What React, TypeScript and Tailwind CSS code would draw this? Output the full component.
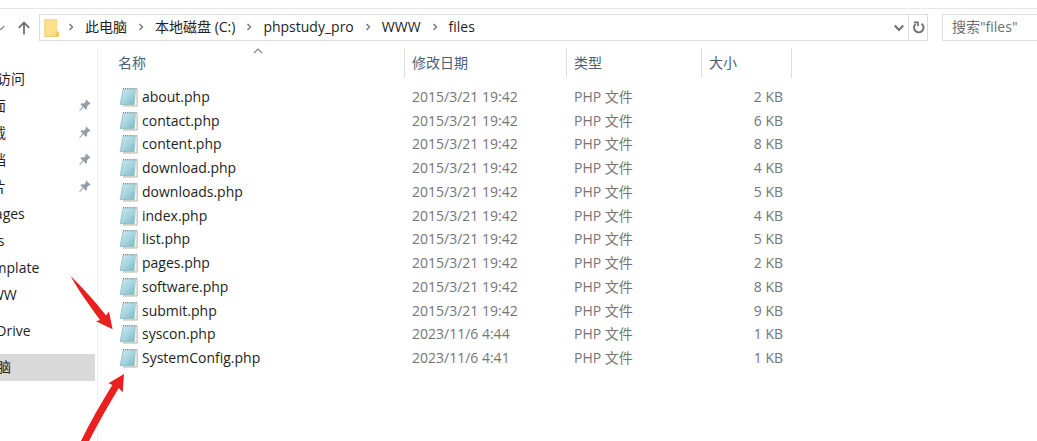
import { Fragment } from 'react';
import type { ReactNode } from 'react';

type FileRow = {
  name: string;
  modified: string;
  size: string;
};

const crumbs = ['此电脑', '本地磁盘 (C:)', 'phpstudy_pro', 'WWW', 'files'];

const pinnedFolders = ['桌面', '下载', '文档', '图片'];
const recentFolders = ['Images', 'files', 'Template', 'WWW'];

const files: FileRow[] = [
  { name: 'about.php', modified: '2015/3/21 19:42', size: '2 KB' },
  { name: 'contact.php', modified: '2015/3/21 19:42', size: '6 KB' },
  { name: 'content.php', modified: '2015/3/21 19:42', size: '8 KB' },
  { name: 'download.php', modified: '2015/3/21 19:42', size: '4 KB' },
  { name: 'downloads.php', modified: '2015/3/21 19:42', size: '5 KB' },
  { name: 'index.php', modified: '2015/3/21 19:42', size: '4 KB' },
  { name: 'list.php', modified: '2015/3/21 19:42', size: '5 KB' },
  { name: 'pages.php', modified: '2015/3/21 19:42', size: '2 KB' },
  { name: 'software.php', modified: '2015/3/21 19:42', size: '8 KB' },
  { name: 'submit.php', modified: '2015/3/21 19:42', size: '9 KB' },
  { name: 'syscon.php', modified: '2023/11/6 4:44', size: '1 KB' },
  { name: 'SystemConfig.php', modified: '2023/11/6 4:41', size: '1 KB' },
];

function FolderIcon() {
  return (
    <svg width="16" height="20" viewBox="0 0 16 20" className="shrink-0">
      <path d="M0.5 1h13v12l1.5 1.5V19H0.5z" fill="#fbe08c" />
      <path d="M0.5 1h1v18h-1z" fill="#f0cf72" />
      <path d="M11.5 18.5v-3.5l2-2 1.5 1.5V19z" fill="#eec75e" />
      <path d="M0.5 18H15v1H0.5z" fill="#f0cf72" />
    </svg>
  );
}

function NotepadIcon() {
  return (
    <svg width="20" height="20" viewBox="0 0 20 20" className="shrink-0">
      <path d="M5 2h13.6v17.4H4z" fill="#b9b5a4" />
      <path d="M4.5 2h13.2v16.4H3z" fill="#f4f2ea" />
      <path d="M4 2h13L15.4 17.6H1.2z" fill="url(#note)" />
      <path d="M4 2.5 1.2 17.6h14.2" fill="none" stroke="#7fb0bc" strokeWidth="0.7" />
      <path d="M4 1.6h13.6" stroke="#66757a" strokeWidth="1.4" strokeDasharray="1.1 1" />
      <defs>
        <linearGradient id="note" x1="0" y1="0" x2="1" y2="1">
          <stop offset="0" stopColor="#cdeaf0" />
          <stop offset="0.5" stopColor="#a6d5df" />
          <stop offset="1" stopColor="#76b6c6" />
        </linearGradient>
      </defs>
    </svg>
  );
}

function PinIcon() {
  return (
    <svg width="12" height="13" viewBox="0 0 12 13" className="shrink-0">
      <path
        d="M7.2 0.6 11.6 4.8 10.4 5.6 9.8 5.4 8 7.4 8.1 9.8 7 10.8 4.3 8.3 0.8 12.2 0.2 11.6 3.6 7.5 1.4 5.3 2.4 4.3 4.9 4.4 6.9 2.4 6.5 1.6z"
        fill="#94a0a8"
      />
    </svg>
  );
}

function CrumbArrow() {
  return (
    <svg width="6" height="8" viewBox="0 0 6 8" className="shrink-0">
      <path d="M1.5 1 4.5 4 1.5 7" fill="none" stroke="#777" strokeWidth="1.4" />
    </svg>
  );
}

function SideItem({ children, root, pinned, active }: { children: ReactNode; root?: boolean; pinned?: boolean; active?: boolean }) {
  return (
    <a
      href="#"
      className={`flex h-[27px] items-center justify-between pr-1 pb-[2px] whitespace-nowrap ${root ? 'pl-[17px]' : 'pl-[26px]'} ${
        active ? 'bg-[#d9d9d9]' : ''
      }`}
    >
      {children}
      {pinned && <PinIcon />}
    </a>
  );
}

function AddressBar() {
  return (
    <header className="mt-2 flex items-center border-t border-[#e6e6e6] pt-[5px]">
      <div className="flex w-[39px] shrink-0 items-center justify-between pr-2">
        <button aria-label="最近浏览的位置">
          <svg width="5" height="8" viewBox="0 0 5 8">
            <path d="M0 5 1 5.5 4.2 2" fill="none" stroke="#8a8a8a" strokeWidth="1.3" />
          </svg>
        </button>
        <button aria-label="上移">
          <svg width="14" height="14" viewBox="0 0 14 14">
            <path d="M7 13.5V1.5M1.8 6.8 7 1.5 12.2 6.8" fill="none" stroke="#707070" strokeWidth="1.8" />
          </svg>
        </button>
      </div>

      <nav className="flex h-[27px] min-w-0 flex-1 items-center border border-[#dcdcdc] pl-1">
        <FolderIcon />
        <div className="flex flex-1 items-center gap-[11px] pb-[2px] pl-2">
          {crumbs.map((crumb) => (
            <Fragment key={crumb}>
              <CrumbArrow />
              <button className="whitespace-nowrap">{crumb}</button>
            </Fragment>
          ))}
        </div>
        <button aria-label="以前的位置" className="px-1">
          <svg width="10" height="8" viewBox="0 0 10 8">
            <path d="M0.8 1.5 5 6 9.2 1.5" fill="none" stroke="#707070" strokeWidth="2" />
          </svg>
        </button>
        <button aria-label="刷新" className="flex h-full w-[19px] items-center justify-center border-l border-[#dcdcdc]">
          <svg width="13" height="13" viewBox="0 0 13 13">
            <path d="M9.6 2.7a4.8 4.8 0 1 1-6 0.3" fill="none" stroke="#707070" strokeWidth="1.9" />
            <path d="M2 1.3h3.9v4" fill="none" stroke="#707070" strokeWidth="1.7" />
          </svg>
        </button>
      </nav>

      <input
        type="text"
        aria-label="搜索"
        placeholder={'搜索"files"'}
        className="ml-[14px] h-[27px] w-[95px] border-y border-l border-[#dcdcdc] pb-[2px] pl-[9px] outline-none placeholder:text-[#707070]"
      />
    </header>
  );
}

function Sidebar() {
  return (
    <aside className="w-[98px] shrink-0 overflow-hidden border-r border-[#f0f0f0] pt-[18px] pr-[2px]">
      {/* Tree is scrolled sideways, so the icons and first letters are cut off */}
      <div className="-ml-12 flex flex-col gap-[9px]">
        <div>
          <SideItem root>快速访问</SideItem>
          {pinnedFolders.map((folder) => (
            <SideItem key={folder} pinned>
              {folder}
            </SideItem>
          ))}
          {recentFolders.map((folder) => (
            <SideItem key={folder}>{folder}</SideItem>
          ))}
        </div>
        <SideItem root>OneDrive</SideItem>
        <SideItem root active>
          此电脑
        </SideItem>
      </div>
    </aside>
  );
}

function FileTable() {
  return (
    <main className="min-w-0 flex-1">
      <table className="h-[322px] w-[694px] table-fixed border-separate border-spacing-0 text-left">
        <thead className="text-[#4c607a]">
          <tr className="h-[30px]">
            <th className="w-[307px] border-r border-[#dedede] p-0 font-normal">
              <div className="relative ml-[14px] pl-[6px]">
                名称
                <svg width="10" height="6" viewBox="0 0 10 6" className="absolute -top-[5px] left-1/2 -translate-x-1/2">
                  <path d="M1 5 5 1 9 5" fill="none" stroke="#808080" strokeWidth="1.2" />
                </svg>
              </div>
            </th>
            <th className="w-[162px] border-r border-[#dedede] p-0 pl-[7px] font-normal">修改日期</th>
            <th className="w-[135px] border-r border-[#dedede] p-0 pl-[7px] font-normal">类型</th>
            <th className="w-[90px] border-r border-[#dedede] p-0 pl-[7px] font-normal">大小</th>
          </tr>
          <tr className="h-[7px]">
            <td colSpan={4} className="p-0" />
          </tr>
        </thead>
        <tbody className="text-[#757575]">
          {files.map((file) => (
            <tr key={file.name}>
              <td className="p-0 pl-[21px] text-[#1e1e1e]">
                <div className="flex items-center gap-[3px]">
                  <NotepadIcon />
                  {file.name}
                </div>
              </td>
              <td className="p-0 pl-[7px]">{file.modified}</td>
              <td className="p-0 pl-[7px]">PHP 文件</td>
              <td className="p-0 pr-[9px] text-right">{file.size}</td>
            </tr>
          ))}
        </tbody>
      </table>
    </main>
  );
}

// Red hand-drawn markers pointing at the two newest files
function Markers() {
  return (
    <svg width="140" height="180" viewBox="0 265 140 180" className="pointer-events-none absolute top-[265px] left-0" fill="#ea1f1f">
      <path d="M70.6 276 C80 285 95 301 106 315.5 L109 311.5 L112.6 329.3 L96 321.3 L100 320 C90 306 78 290 70.6 276z" />
      <path d="M124 374 L122.7 392.5 L118.8 388 C110 403 98 423 87 445 L79 445 C89 424 100 405 112.3 385 L108.5 383.3z" />
    </svg>
  );
}

export default function App() {
  return (
    <div className="relative flex min-h-screen flex-col overflow-hidden bg-white font-['Open_Sans','Noto_Sans_CJK_SC',sans-serif] text-sm leading-5 text-[#1e1e1e]">
      <AddressBar />
      <div className="mt-[7px] flex flex-1">
        <Sidebar />
        <FileTable />
      </div>
      <Markers />
    </div>
  );
}
